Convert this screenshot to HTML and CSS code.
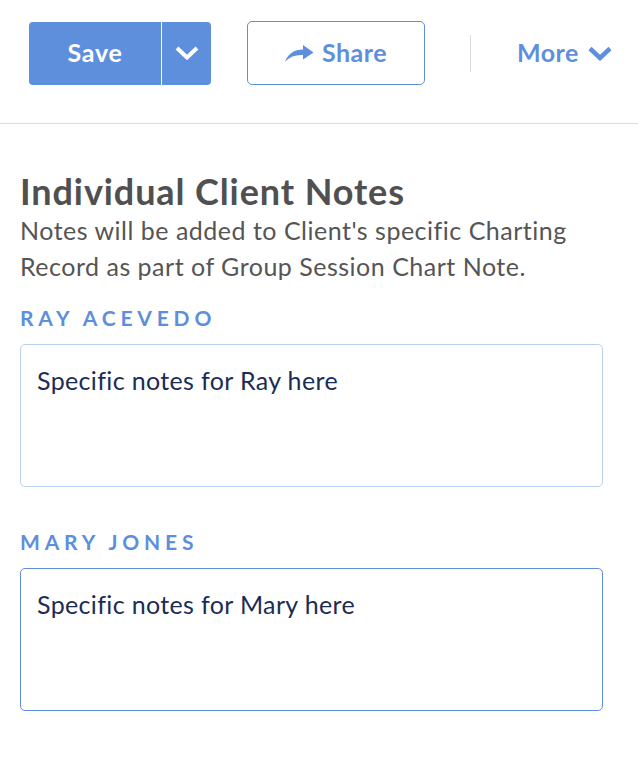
FILE: index.html
```html
<!DOCTYPE html>
<html lang="en">
<head>
  <title>Individual Client Notes</title>
  <meta charset="utf-8">
  <link rel="stylesheet" href="styles.css">
</head>
<body>
  <div class="toolbar">
    <div class="save-group">
      <button type="button" class="save">Save</button>
      <button type="button" class="save-arrow">
        <svg width="24" height="15" viewBox="0 0 24 15"><path d="M2 3 L12 12.500 L22 3" fill="none" stroke="#fff" stroke-width="4"/></svg>
      </button>
    </div>
    <button type="button" class="share">
      <svg class="share-icon" width="29" height="17" viewBox="0 0 29 17"><path d="M0 16.500 C3 9 9 4.500 18 4.500 L18 0 L28.500 7.500 L18 14.500 L18 10 C11 9.500 5 11.500 0 16.500 Z" fill="#5e8fdc"/></svg>
      Share
    </button>
    <div class="divider"></div>
    <button type="button" class="more">
      More
      <svg class="more-icon" width="24" height="15" viewBox="0 0 24 15"><path d="M2 2.500 L12 12 L22 2.500" fill="none" stroke="#5e8fdc" stroke-width="4.500"/></svg>
    </button>
  </div>
  <div class="content">
    <h1>Individual Client Notes</h1>
    <p class="intro">Notes will be added to Client's specific Charting Record as part of Group Session Chart Note.</p>
    <label class="client-name">RAY ACEVEDO</label>
    <div class="note">Specific notes for Ray here</div>
    <label class="client-name">MARY JONES</label>
    <div class="note active">Specific notes for Mary here</div>
  </div>
</body>
</html>
```

FILE: styles.css
```css
body {
  margin: 0;
  background: #fff;
  font-family: "Lato", "Open Sans", sans-serif;
}
button {
  font-family: inherit;
  cursor: pointer;
}
.toolbar {
  display: flex;
  align-items: center;
  height: 106px;
  padding: 0 0 17px 29px;
  border-bottom: 1px solid #dcdcdc;
}
.save-group {
  display: flex;
  width: 182px;
  height: 63px;
  margin: 1px 36px 0 0;
}
.save {
  width: 133px;
  border: none;
  border-right: 1px solid #fff;
  border-radius: 4px 0 0 4px;
  background: #5e8fdc;
  color: #fff;
  font-size: 25px;
  font-weight: 700;
  letter-spacing: 0.7px;
  padding: 0 0 3px;
}
.save-arrow {
  flex: 1;
  border: none;
  border-radius: 0 4px 4px 0;
  background: #5e8fdc;
  padding: 0;
}
.share {
  display: flex;
  align-items: center;
  justify-content: center;
  gap: 8px;
  width: 178px;
  height: 64px;
  margin-right: 45px;
  border: 1px solid #5e8fdc;
  border-radius: 5px;
  background: #fff;
  color: #5e8fdc;
  font-size: 25px;
  font-weight: 700;
  letter-spacing: 0.5px;
  padding: 0 0 2px;
}
.share-icon {
  margin-top: 3px;
}
.divider {
  width: 1px;
  height: 37px;
  background: #dedede;
  margin-right: 46px;
}
.more {
  display: flex;
  align-items: center;
  gap: 9px;
  border: none;
  background: none;
  color: #5e8fdc;
  font-size: 25px;
  font-weight: 700;
  letter-spacing: 0.5px;
  padding: 0 0 2px;
}
.more-icon {
  margin-top: 3px;
}
.content {
  padding: 46px 35px 0 20px;
}
h1 {
  margin: 0;
  color: #505050;
  font-size: 36px;
  line-height: 42px;
  font-weight: 700;
  letter-spacing: 0.9px;
}
.intro {
  margin: 0 0 21px;
  color: #555;
  font-size: 25px;
  line-height: 36px;
  letter-spacing: 0.5px;
}
.client-name {
  display: block;
  color: #5e8fdc;
  font-size: 21px;
  line-height: 26px;
  font-weight: 700;
  letter-spacing: 4.8px;
  margin-bottom: 13px;
}
.note {
  height: 143px;
  box-sizing: border-box;
  margin-bottom: 42px;
  padding: 18px 16px;
  border: 1px solid #b9cff2;
  border-radius: 5px;
  color: #1b2d55;
  font-size: 25px;
  line-height: 34px;
  letter-spacing: 0.35px;
}
.note.active {
  border-color: #5e8fdc;
}
```
